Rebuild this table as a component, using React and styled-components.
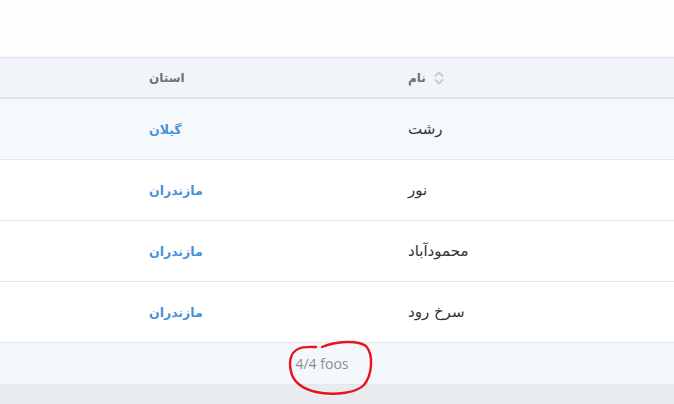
import React from "react";
import styled, { createGlobalStyle } from "styled-components";

const Global = createGlobalStyle`
  html, body { margin: 0; padding: 0; background: #e9ecef; }
  body { font-family: "DejaVu Sans", "Open Sans", sans-serif; }
`;

const Page = styled.div`
  width: 674px;
  height: 404px;
  display: flex;
  flex-direction: column;
  background: #e9ecef;
  overflow: hidden;
`;

const TopBar = styled.div`
  height: 57px;
  background: #fdfdfd;
  border-bottom: 1px solid #dfe3e8;
  flex: none;
`;

const Table = styled.div`
  display: grid;
  grid-template-columns: 149px 259px 1fr;
  background: #fff;
`;

const HeadCell = styled.div`
  height: 39px;
  background: #f1f4f8;
  border-bottom: 2px solid #e1e5ea;
  display: flex;
  align-items: center;
  gap: 8px;
  font-size: 12px;
  font-weight: 700;
  color: #69717d;
`;

const Cell = styled.div`
  height: 60px;
  border-bottom: 1px solid #e3e6ea;
  background: ${(p) => (p.$alt ? "#f5f9fd" : "#fff")};
  display: flex;
  align-items: center;
  font-size: ${(p) => (p.$link ? "12.5px" : "15px")};
  font-weight: ${(p) => (p.$link ? 700 : 400)};
  color: ${(p) => (p.$link ? "#4592da" : "#333")};
`;

const Footer = styled.div`
  position: relative;
  height: 41px;
  background: #f4f8fc;
  border-bottom: 1px solid #e3e6ea;
  display: flex;
  align-items: center;
  justify-content: center;
  padding-right: 30px;
  font-family: "Open Sans", "DejaVu Sans", sans-serif;
  font-size: 14px;
  color: #8a8e94;
`;

const Scribble = styled.svg`
  position: absolute;
  left: 286px;
  top: -2px;
  overflow: visible;
`;

const SortIcon = () => (
  <svg width="10" height="14" viewBox="0 0 10 14" fill="none" stroke="#c7cdd6" strokeWidth="1.8" strokeLinecap="round" strokeLinejoin="round">
    <polyline points="1.5,5 5,1.5 8.5,5" />
    <polyline points="1.5,9 5,12.5 8.5,9" />
  </svg>
);

const rows = [
  { name: "رشت", prov: "گیلان" },
  { name: "نور", prov: "مازندران" },
  { name: "محمودآباد", prov: "مازندران" },
  { name: "سرخ رود", prov: "مازندران" },
];

export default function App() {
  return (
    <>
      <Global />
      <Page>
        <TopBar />
        <Table>
          <HeadCell />
          <HeadCell>استان</HeadCell>
          <HeadCell>
            نام
            <SortIcon />
          </HeadCell>
          {rows.map((r, i) => (
            <React.Fragment key={i}>
              <Cell $alt={i === 0} />
              <Cell $alt={i === 0} $link>{r.prov}</Cell>
              <Cell $alt={i === 0}>{r.name}</Cell>
            </React.Fragment>
          ))}
        </Table>
        <Footer>
          4/4 foos
          <Scribble width="90" height="56" viewBox="0 0 90 56">
            <path
              d="M36 6 C50 0 72 -1 80 5 C88 14 86 34 78 44 C70 52 50 54 36 52 C22 50 10 44 6 34 C2 22 4 12 12 8 C18 5 26 6 30 6"
              fill="none"
              stroke="#e8141c"
              strokeWidth="2.4"
              strokeLinecap="round"
            />
          </Scribble>
        </Footer>
      </Page>
    </>
  );
}
